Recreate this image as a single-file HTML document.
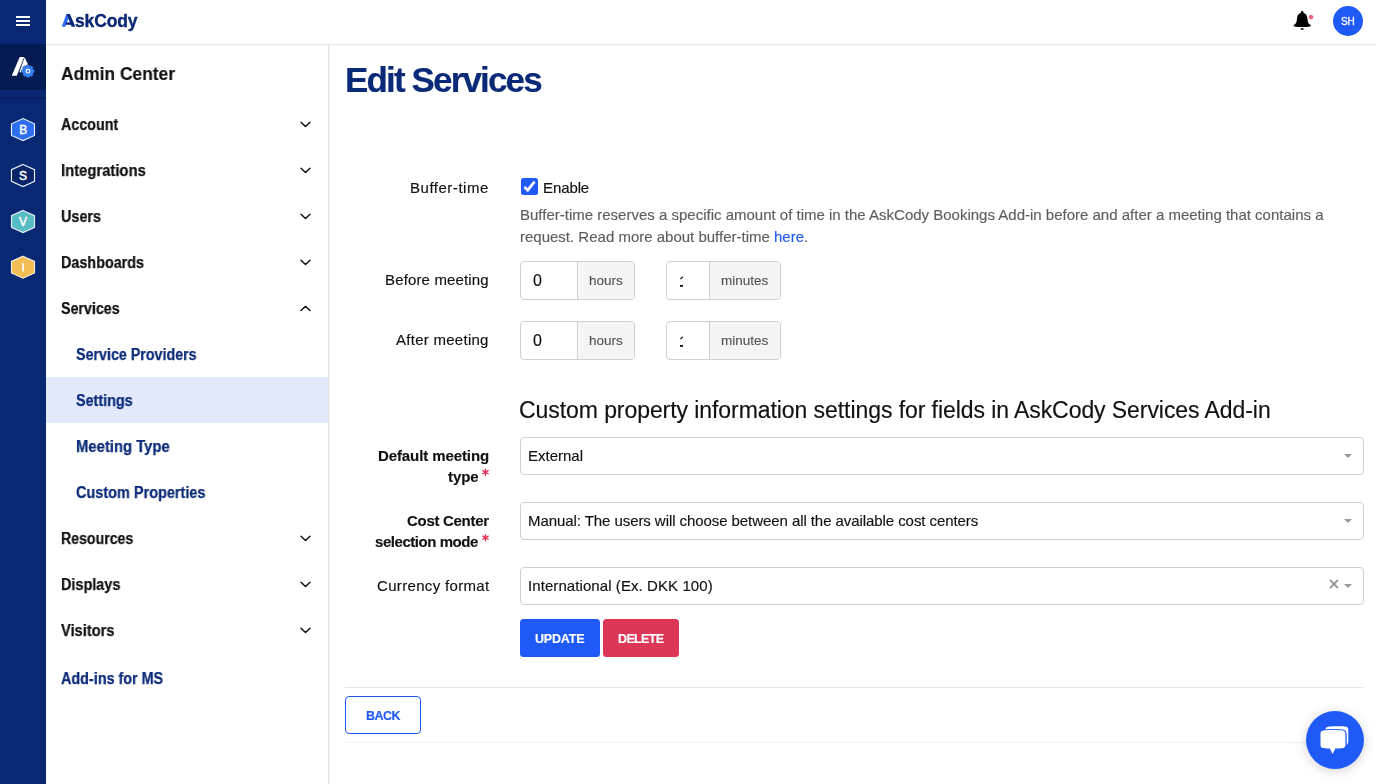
<!DOCTYPE html>
<html><head><meta charset="utf-8">
<style>
*{box-sizing:border-box;margin:0;padding:0}
html,body{width:1376px;height:784px;overflow:hidden;background:#fff;font-family:"Liberation Sans",sans-serif;color:#111}
.a{will-change:transform;-webkit-text-stroke:0.15px currentColor}
.a{position:absolute;white-space:nowrap;line-height:1}
#rail{position:absolute;left:0;top:0;width:46px;height:784px;background:#082874}
#railact{position:absolute;left:0;top:44px;width:46px;height:46px;background:#051c52}
#railsep{position:absolute;left:0;top:97px;width:46px;height:2px;background:#061e5c}
#hdrline{position:absolute;left:46px;top:44px;width:1330px;height:1px;background:#e6e6e6}
#panel{position:absolute;left:46px;top:45px;width:283px;height:739px;background:#fff}
#panelline{position:absolute;left:328px;top:45px;width:2px;height:739px;background:linear-gradient(90deg,#e6e6e8 50%,#f3f3f3 50%)}
.nav{font-weight:bold;font-size:16px;color:#111;transform-origin:0 0;-webkit-text-stroke:0.25px #111}
.sub{font-weight:bold;font-size:16px;color:#0b2a78;transform-origin:0 0;-webkit-text-stroke:0.25px #0b2a78}
.chev{position:absolute;left:300px;width:12px;height:8px}
#hl{position:absolute;left:46px;top:377px;width:282px;height:46px;background:#e1e9fb}
.lbl{font-size:15px;color:#111;text-align:right}
.lblb{font-size:15px;font-weight:bold;color:#111;letter-spacing:-0.1px}
.grp{position:absolute;height:38.6px;border:1px solid #d0d0d0;border-radius:4px;overflow:hidden;background:#fff}
.addon{position:absolute;top:0;bottom:0;right:0;background:#f5f5f5;border-left:1px solid #d0d0d0}
.sel{position:absolute;left:520px;width:844px;height:38px;border:1px solid #cfcfcf;border-radius:4px;background:#fff}
.arr{position:absolute;left:1344px;width:0;height:0;border-left:4px solid transparent;border-right:4px solid transparent;border-top:4px solid #999}
.ast{color:#e0315a;font-size:15px}
</style></head><body>

<div id="rail"></div>
<div id="railact"></div>
<div id="railsep"></div>
<!-- hamburger -->
<div style="position:absolute;left:16px;top:16.2px;width:14px;height:1.7px;background:#fff"></div>
<div style="position:absolute;left:16px;top:20.3px;width:14px;height:1.7px;background:#fff"></div>
<div style="position:absolute;left:16px;top:24.3px;width:14px;height:1.7px;background:#fff"></div>

<div id="hdrline"></div>
<div id="panelline"></div>
<div id="hl"></div>
<div style="position:absolute;left:344px;top:117px;width:1px;height:625px;background:#fcfcfc"></div><div style="position:absolute;left:1363px;top:117px;width:1px;height:625px;background:#fdfdfd"></div>


<svg style="position:absolute;left:0;top:0" width="46" height="300">
<polygon points="11.7,75.7 19.7,57.1 24.2,57.1 16.8,75.7" fill="#fff"/>
<polygon points="24.7,57.3 29,66.8 26,72.3 19.4,72.3" fill="#fff"/>
<g fill="#3580f4" stroke="#051c52" stroke-width="0.7"><circle cx="28" cy="71.2" r="5.3"/><rect x="26.55" y="64.9" width="2.9" height="3.7" rx="0.7" transform="rotate(0 28 71.2)"/><rect x="26.55" y="64.9" width="2.9" height="3.7" rx="0.7" transform="rotate(45 28 71.2)"/><rect x="26.55" y="64.9" width="2.9" height="3.7" rx="0.7" transform="rotate(90 28 71.2)"/><rect x="26.55" y="64.9" width="2.9" height="3.7" rx="0.7" transform="rotate(135 28 71.2)"/><rect x="26.55" y="64.9" width="2.9" height="3.7" rx="0.7" transform="rotate(180 28 71.2)"/><rect x="26.55" y="64.9" width="2.9" height="3.7" rx="0.7" transform="rotate(225 28 71.2)"/><rect x="26.55" y="64.9" width="2.9" height="3.7" rx="0.7" transform="rotate(270 28 71.2)"/><rect x="26.55" y="64.9" width="2.9" height="3.7" rx="0.7" transform="rotate(315 28 71.2)"/></g>
<g fill="#3580f4"><rect x="26.55" y="64.9" width="2.9" height="3.7" rx="0.7" transform="rotate(0 28 71.2)"/><rect x="26.55" y="64.9" width="2.9" height="3.7" rx="0.7" transform="rotate(45 28 71.2)"/><rect x="26.55" y="64.9" width="2.9" height="3.7" rx="0.7" transform="rotate(90 28 71.2)"/><rect x="26.55" y="64.9" width="2.9" height="3.7" rx="0.7" transform="rotate(135 28 71.2)"/><rect x="26.55" y="64.9" width="2.9" height="3.7" rx="0.7" transform="rotate(180 28 71.2)"/><rect x="26.55" y="64.9" width="2.9" height="3.7" rx="0.7" transform="rotate(225 28 71.2)"/><rect x="26.55" y="64.9" width="2.9" height="3.7" rx="0.7" transform="rotate(270 28 71.2)"/><rect x="26.55" y="64.9" width="2.9" height="3.7" rx="0.7" transform="rotate(315 28 71.2)"/><circle cx="28" cy="71.2" r="5.3"/></g>
<circle cx="28" cy="71.2" r="1.85" fill="none" stroke="#fff" stroke-width="1.1"/>
<polygon points="23,118.6 34.5,123.8 34.5,135.4 23,140.6 11.5,135.4 11.5,123.8" fill="#2d6ef2" stroke="#e8eefc" stroke-width="1.15"/>
<polygon points="23,164.5 34.5,169.7 34.5,181.3 23,186.5 11.5,181.3 11.5,169.7" fill="#0a2468" stroke="#e8eefc" stroke-width="1.15"/>
<polygon points="23,210.5 34.5,215.7 34.5,227.3 23,232.5 11.5,227.3 11.5,215.7" fill="#58bcc4" stroke="#e8eefc" stroke-width="1.15"/>
<polygon points="23,256.2 34.5,261.4 34.5,273.0 23,278.2 11.5,273.0 11.5,261.4" fill="#f2bd55" stroke="#f5efe0" stroke-width="1.15"/>
<g fill="#fff" stroke="#fff" stroke-width="0.45" font-family="Liberation Sans" font-weight="normal" font-size="12" text-anchor="middle">
<text x="23.2" y="134">B</text><text x="23" y="180">S</text><text x="23" y="226">V</text>
</g>
<rect x="22.2" y="263.2" width="1.7" height="8.2" fill="#fff"/>
</svg>
<svg style="position:absolute;left:1290px;top:8px" width="26" height="26">
<circle cx="12.2" cy="4.3" r="1.25" fill="#000"/>
<path d="M12.2 4.8 C7.7 4.8 7.1 8.8 6.9 11.6 C6.7 14.6 5.8 16 4 17.1 C3.2 17.6 3.4 18.2 4.3 18.4 Q12.2 19.6 20.1 18.4 C21 18.2 21.2 17.6 20.4 17.1 C18.6 16 17.7 14.6 17.5 11.6 C17.3 8.8 16.7 4.8 12.2 4.8Z" fill="#000"/>
<path d="M10.6 20.3 L13.8 20.3 A1.6 1.6 0 0 1 10.6 20.3Z" fill="#000"/>
<circle cx="21" cy="9.1" r="2.4" fill="#e6395c" stroke="#fff" stroke-width="0.6"/>
<circle cx="21" cy="9.1" r="0.9" fill="#f0a0b0"/>
</svg>

<!-- logo -->
<svg style="position:absolute;left:0;top:0" width="150" height="40">
<polygon points="61.7,26.7 66.4,14.1 70.2,14.1 65.4,26.7" fill="#2c6df5"/>
<polygon points="69.9,14.1 66.8,14.1 68.6,19 71.6,26.7 75.4,26.7" fill="#0b2777"/>
<rect x="65.8" y="22.4" width="7.4" height="2.4" fill="#0b2777"/>
</svg>
<div class="a" style="left:74.6px;top:12.8px;font-size:17.5px;font-weight:bold;color:#0b2777;letter-spacing:-0.15px;-webkit-text-stroke:0.35px #0b2777">skCody</div>

<!-- header right -->
<div style="position:absolute;left:1332.9px;top:5.7px;width:30.6px;height:30.6px;border-radius:50%;background:#1f5af6"></div>
<div class="a" style="left:1341.4px;top:17.1px;font-size:10px;color:#fff;-webkit-text-stroke:0.3px #fff;letter-spacing:-0.2px">SH</div>

<!-- sidebar -->
<div class="a" style="left:61px;top:64.2px;font-size:19px;font-weight:bold;color:#111;transform:scaleX(0.915);transform-origin:0 0">Admin Center</div>
<div class="a nav" style="left:61px;top:117.06px;transform:scaleX(0.8922)">Account</div>
<div class="a nav" style="left:61px;top:163.06px;transform:scaleX(0.9256)">Integrations</div>
<div class="a nav" style="left:61px;top:209.06px;transform:scaleX(0.9000)">Users</div>
<div class="a nav" style="left:61px;top:255.06px;transform:scaleX(0.8978)">Dashboards</div>
<div class="a nav" style="left:61px;top:301.06px;transform:scaleX(0.8891)">Services</div>
<div class="a sub" style="left:76px;top:347.06px;transform:scaleX(0.8918)">Service Providers</div>
<div class="a sub" style="left:76px;top:393.06px;transform:scaleX(0.8968)">Settings</div>
<div class="a sub" style="left:76px;top:439.06px;transform:scaleX(0.9260)">Meeting Type</div>
<div class="a sub" style="left:76px;top:485.06px;transform:scaleX(0.9042)">Custom Properties</div>
<div class="a nav" style="left:61px;top:531.06px;transform:scaleX(0.8825)">Resources</div>
<div class="a nav" style="left:61px;top:577.06px;transform:scaleX(0.9016)">Displays</div>
<div class="a nav" style="left:61px;top:623.06px;transform:scaleX(0.9155)">Visitors</div>
<div class="a sub" style="left:61px;top:670.56px;transform:scaleX(0.8982)">Add-ins for MS</div>

<!-- main -->
<div class="a" style="left:345px;top:62.4px;font-size:35px;font-weight:bold;letter-spacing:-1.85px;color:#0a2a78">Edit Services</div>

<svg style="position:absolute;left:0;top:0" width="1376" height="784"><g fill="none" stroke="#111" stroke-width="1.45" stroke-linecap="round" stroke-linejoin="round"><path d="M301 122.2 L305.5 126.6 L310 122.2"/><path d="M301 168.2 L305.5 172.6 L310 168.2"/><path d="M301 214.2 L305.5 218.6 L310 214.2"/><path d="M301 260.2 L305.5 264.6 L310 260.2"/><path d="M301 536.2 L305.5 540.6 L310 536.2"/><path d="M301 582.2 L305.5 586.6 L310 582.2"/><path d="M301 628.2 L305.5 632.6 L310 628.2"/><path d="M301 310.6 L305.5 306.2 L310 310.6"/></g></svg>

<!-- form -->
<div class="a lbl" style="right:887px;top:180.3px;letter-spacing:0.52px">Buffer-time</div>
<div style="position:absolute;left:521px;top:178px;width:17px;height:17px;border-radius:2.5px;background:#1f5af6"></div>
<svg style="position:absolute;left:521px;top:178px" width="17" height="17"><path d="M3.4 9.1 L6.7 12.2 L13.6 3.6" fill="none" stroke="#fff" stroke-width="2.7" stroke-linecap="butt" stroke-linejoin="miter"/></svg>
<div class="a" style="left:543px;top:180.3px;font-size:15px;letter-spacing:-0.1px;color:#111">Enable</div>
<div class="a" style="left:520px;top:207.3px;font-size:15px;color:#5e5e5e">Buffer-time reserves a specific amount of time in the AskCody Bookings Add-in before and after a meeting that contains a</div>
<div class="a" style="left:520px;top:229.3px;font-size:15px;color:#5e5e5e">request. Read more about buffer-time <span style="color:#1f5af6">here</span>.</div>

<div class="a lbl" style="right:887px;top:272.3px;letter-spacing:0.15px">Before meeting</div>
<div class="a lbl" style="right:887px;top:332.3px;letter-spacing:0.27px">After meeting</div>

<div class="grp" style="left:520px;top:261px;width:115px"><div class="addon" style="left:56px"></div></div>
<div class="grp" style="left:666px;top:261px;width:115px"><div class="addon" style="left:42px"></div></div>
<div class="grp" style="left:520px;top:321px;width:115px"><div class="addon" style="left:56px"></div></div>
<div class="grp" style="left:666px;top:321px;width:115px"><div class="addon" style="left:42px"></div></div>

<div class="a" style="left:532.5px;top:273px;font-size:16px">0</div>
<div class="a" style="left:532.5px;top:333px;font-size:16px">0</div>
<div class="a" style="left:589px;top:274px;font-size:13.5px;color:#555">hours</div>
<div class="a" style="left:589px;top:334px;font-size:13.5px;color:#555">hours</div>
<div class="a" style="left:721px;top:274px;font-size:13.5px;color:#555">minutes</div>
<div class="a" style="left:721px;top:334px;font-size:13.5px;color:#555">minutes</div>
<svg style="position:absolute;left:0;top:0" width="1376" height="784"><g fill="#111">
<path d="M680 278.6 L682.6 276.2 L683.2 277.2 L680.8 279.4Z"/><rect x="680" y="285" width="3" height="1.8"/>
<path d="M680 338.6 L682.6 336.2 L683.2 337.2 L680.8 339.4Z"/><rect x="680" y="345" width="3" height="1.8"/>
</g></svg>

<div class="a" style="left:519px;top:398.5px;font-size:23px;color:#111;letter-spacing:-0.07px">Custom property information settings for fields in AskCody Services Add-in</div>

<div class="a lblb" style="right:887px;top:447.9px">Default meeting</div>
<div class="a lblb" style="right:898px;top:469.3px">type</div>
<svg style="position:absolute;left:0;top:0" width="1376" height="784"><path d="M485.50 469.10 L485.50 475.30 M488.18 470.65 L482.82 473.75 M488.18 473.75 L482.82 470.65 M485.50 534.60 L485.50 540.80 M488.18 536.15 L482.82 539.25 M488.18 539.25 L482.82 536.15 " stroke="#e0345a" stroke-width="1.4" stroke-linecap="round"/></svg>
<div class="a lblb" style="right:887px;top:512.7px;letter-spacing:-0.3px">Cost Center</div>
<div class="a lblb" style="right:898px;top:534.1px;letter-spacing:-0.45px">selection mode</div>

<div class="a lbl" style="right:887px;top:578.1px;letter-spacing:0.33px">Currency format</div>

<div class="sel" style="top:437px"></div>
<div class="sel" style="top:502px"></div>
<div class="sel" style="top:567px"></div>
<div class="arr" style="top:454px"></div>
<div class="arr" style="top:519px"></div>
<div class="arr" style="top:584px"></div>
<svg style="position:absolute;left:1329px;top:579px" width="10" height="10"><path d="M1 1 L9 9 M9 1 L1 9" stroke="#999" stroke-width="1.8"/></svg>
<div class="a" style="left:528px;top:448.1px;font-size:15px;color:#111">External</div>
<div class="a" style="left:528px;top:512.8px;font-size:15px;color:#111;letter-spacing:-0.07px">Manual: The users will choose between all the available cost centers</div>
<div class="a" style="left:528px;top:578.1px;font-size:15px;color:#111;letter-spacing:0.08px">International (Ex. DKK 100)</div>

<div style="position:absolute;left:519.5px;top:619.2px;width:80.5px;height:38.3px;border-radius:3.5px;background:#1f5af6"></div>
<div class="a" style="left:535px;top:633px;font-size:12.5px;font-weight:bold;color:#fff;letter-spacing:-0.2px">UPDATE</div>
<div style="position:absolute;left:603px;top:619.2px;width:76px;height:38.3px;border-radius:3.5px;background:#dc3757"></div>
<div class="a" style="left:618px;top:633px;font-size:12.5px;font-weight:bold;color:#fff;letter-spacing:-0.65px">DELETE</div>

<div style="position:absolute;left:345px;top:687px;width:1019px;height:1px;background:#e6e6e6"></div>
<div style="position:absolute;left:345px;top:696px;width:76px;height:38px;border-radius:4px;border:1px solid #1f5af6"></div>
<div class="a" style="left:366px;top:710px;font-size:12.5px;font-weight:bold;color:#1f5af6;letter-spacing:-0.5px">BACK</div>
<div style="position:absolute;left:345px;top:742px;width:1019px;height:1px;background:#f0f0f0"></div>

<div style="position:absolute;left:1306px;top:711px;width:58px;height:58px;border-radius:50%;background:#1f5af6;box-shadow:0 2px 12px rgba(0,0,0,0.18)"></div>
<svg style="position:absolute;left:1306px;top:711px" width="58" height="58">
<path d="M19.5 19 C19.5 15.8 21 15.3 31 15.3 C40.8 15.3 42.3 15.6 42.3 19 L42.3 29.5 C42.3 32.5 41.8 33.3 40.5 34 L40 20 Z" fill="#fff"/>
<path d="M14.5 23 C14.5 19.6 15.6 19.1 27 19.1 C38.4 19.1 39.4 19.6 39.4 23 L39.4 33.6 C39.4 37.1 38.4 37.6 29.4 37.6 L26.6 42.9 L23.8 37.6 C15.6 37.6 14.5 37.1 14.5 33.6 Z" fill="#fff" stroke="#1f5af6" stroke-width="2.4" paint-order="stroke"/>
</svg>
</body></html>
